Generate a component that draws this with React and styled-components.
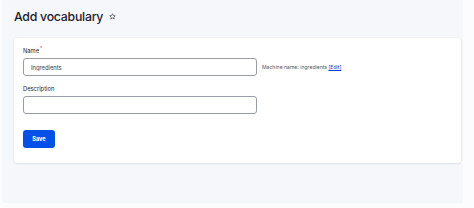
import React from "react";
import styled, { createGlobalStyle } from "styled-components";

const Global = createGlobalStyle`
  html, body {
    margin: 0;
    padding: 0;
    background: #fcfcfe;
    font-family: Inter, "Noto Sans", sans-serif;
  }
`;

const Page = styled.main`
  margin-left: 2px;
  width: 461px;
  height: 203px;
  box-sizing: border-box;
  padding: 0 12px 0 12px;
  background: #f6f7fb;
  border-bottom-left-radius: 4px;
`;

const Header = styled.div`
  display: flex;
  align-items: center;
  gap: 6px;
  height: 38px;
  padding-bottom: 6px;
  box-sizing: border-box;
`;

const Title = styled.h1`
  margin: 0;
  font-size: 12.3px;
  font-weight: 500;
  letter-spacing: -0.25px;
  color: #1f202b;
`;

const Card = styled.form`
  width: 447px;
  box-sizing: border-box;
  background: #fff;
  border-radius: 3px;
  box-shadow: 0 1px 2px rgba(30, 40, 80, 0.08), 0 0 0 0.5px rgba(30, 40, 80, 0.05);
  padding: 9px 9px 15px;
`;

const Field = styled.div`
  margin-bottom: ${(p) => p.$gap || 9}px;
`;

const Label = styled.label`
  display: block;
  font-size: 5.8px;
  color: #232429;
  margin-bottom: 4px;
  line-height: 7px;
  height: 7px;
`;

const Req = styled.sup`
  color: #d72222;
  margin-left: 1px;
  font-size: 4.5px;
  line-height: 0;
`;

const Row = styled.div`
  display: flex;
  align-items: center;
  gap: 5px;
`;

const Input = styled.input`
  display: block;
  width: 234px;
  height: 18px;
  box-sizing: border-box;
  border: 1px solid #9a9da6;
  border-radius: 3px;
  padding: 0 7px;
  font-family: inherit;
  font-size: 5.8px;
  color: #3b3d46;
  outline: none;
`;

const Hint = styled.span`
  font-size: 5.1px;
  color: #55565b;
`;

const EditLink = styled.a`
  color: #003ecc;
  text-decoration: underline;
`;

const Button = styled.button`
  display: block;
  width: 32px;
  height: 18px;
  border: none;
  border-radius: 3px;
  background: #0550e6;
  color: #fff;
  font-family: inherit;
  font-size: 5.6px;
  font-weight: 700;
  padding: 0;
`;

const Star = () => (
  <svg width="7" height="7" viewBox="0 0 24 24" fill="none" stroke="#444" strokeWidth="2.4" strokeLinejoin="round">
    <path d="M12 2.5l2.9 6.1 6.6.8-4.9 4.6 1.3 6.6L12 17.3l-5.9 3.3 1.3-6.6-4.9-4.6 6.6-.8z" />
  </svg>
);

export default function App() {
  return (
    <>
      <Global />
      <Page>
        <Header>
          <Title>Add vocabulary</Title>
          <Star />
        </Header>
        <Card onSubmit={(e) => e.preventDefault()}>
          <Field>
            <Label>
              Name<Req>*</Req>
            </Label>
            <Row>
              <Input defaultValue="Ingredients" />
              <Hint>
                Machine name: ingredients <EditLink href="#">[Edit]</EditLink>
              </Hint>
            </Row>
          </Field>
          <Field $gap={16}>
            <Label>Description</Label>
            <Input />
          </Field>
          <Button type="submit">Save</Button>
        </Card>
      </Page>
    </>
  );
}
